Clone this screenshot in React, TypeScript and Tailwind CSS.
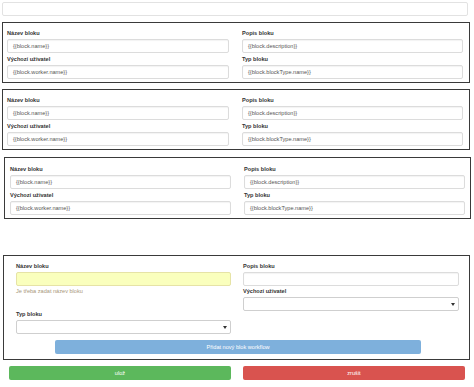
import React from "react";

const font = { fontFamily: '"Liberation Sans", Arial, sans-serif' };

function Label({ children }: { children: React.ReactNode }) {
  return <div className="text-[5.6px] leading-[8px] font-bold text-[#333]">{children}</div>;
}

function Field({ value }: { value?: string }) {
  return (
    <div className="h-[14px] rounded-[2px] border border-[#dcdcdc] bg-white flex items-center pl-[5px] text-[5.6px] text-[#555] shadow-[inset_0_1px_1px_rgba(0,0,0,0.05)]">
      {value}
    </div>
  );
}

function Select() {
  return (
    <div className="h-[14px] rounded-[2px] border border-[#cfcfcf] bg-white flex items-center justify-end pr-[3px]">
      <svg width="4" height="3" viewBox="0 0 4 3">
        <path d="M0 0 L4 0 L2 3 Z" fill="#333" />
      </svg>
    </div>
  );
}

function Block({ variant }: { variant: 0 | 1 | 2 }) {
  const box =
    variant === 2
      ? "ml-[4px] w-[467px] h-[62px] pt-[7px] pl-[5px]"
      : "ml-[2px] w-[468px] h-[61px] pt-[6px] pl-[4px]";
  const lw = variant === 2 ? "w-[221px]" : "w-[222px]";
  return (
    <div className={`border border-[#3a3a3a] flex gap-[13px] ${box}`}>
      <div className={`${lw} flex flex-col`}>
        <Label>Název bloku</Label>
        <div className="mt-[2px]">
          <Field value="{{block.name}}" />
        </div>
        <div className="mt-[2px]">
          <Label>Výchozí uživatel</Label>
        </div>
        <div className="mt-[2px]">
          <Field value="{{block.worker.name}}" />
        </div>
      </div>
      <div className="w-[221px] flex flex-col">
        <Label>Popis bloku</Label>
        <div className="mt-[2px]">
          <Field value="{{block.description}}" />
        </div>
        <div className="mt-[2px]">
          <Label>Typ bloku</Label>
        </div>
        <div className="mt-[2px]">
          <Field value="{{block.blockType.name}}" />
        </div>
      </div>
    </div>
  );
}

export default function App() {
  return (
    <div className="w-[474px] h-[387px] bg-white overflow-hidden pt-[2px]" style={font}>
      <div className="ml-[2px] w-[466px] h-[14px] rounded-[2px] border border-[#e2e2e2]" />
      <div className="mt-[6px]">
        <Block variant={0} />
      </div>
      <div className="mt-[6px]">
        <Block variant={1} />
      </div>
      <div className="mt-[7px]">
        <Block variant={2} />
      </div>

      <div className="mt-[36px] ml-[3px] w-[467px] h-[105px] border border-[#3a3a3a] pt-[6px] pl-[12px] flex flex-col">
        <div className="flex gap-[12px]">
          <div className="w-[215px] flex flex-col">
            <Label>Název bloku</Label>
            <div className="mt-[2px] h-[14px] rounded-[2px] border border-[#e6e3a6] bg-[#faffbd]" />
            <div className="mt-[1px] text-[5.6px] leading-[8px] text-[#a8977a]">Je třeba zadat název bloku</div>
            <div className="mt-[15px]">
              <Label>Typ bloku</Label>
            </div>
            <div className="mt-[2px]">
              <Select />
            </div>
          </div>
          <div className="w-[216px] flex flex-col">
            <Label>Popis bloku</Label>
            <div className="mt-[2px]">
              <Field />
            </div>
            <div className="mt-[1px]">
              <Label>Výchozí uživatel</Label>
            </div>
            <div className="mt-[2px]">
              <Select />
            </div>
          </div>
        </div>
        <div className="mt-[6px] ml-[39px] w-[366px] h-[14px] rounded-[2px] bg-[#7eb0dc] flex items-center justify-center text-[5.6px] text-white">
          Přidat nový blok workflow
        </div>
      </div>

      <div className="mt-[6px] flex">
        <div className="ml-[9px] w-[222px] h-[14px] rounded-[2px] bg-[#5cb85c] flex items-center justify-center text-[5.6px] text-white">
          ulož
        </div>
        <div className="ml-[12px] w-[222px] h-[14px] rounded-[2px] bg-[#d9534f] flex items-center justify-center text-[5.6px] text-white">
          zrušit
        </div>
      </div>
    </div>
  );
}
